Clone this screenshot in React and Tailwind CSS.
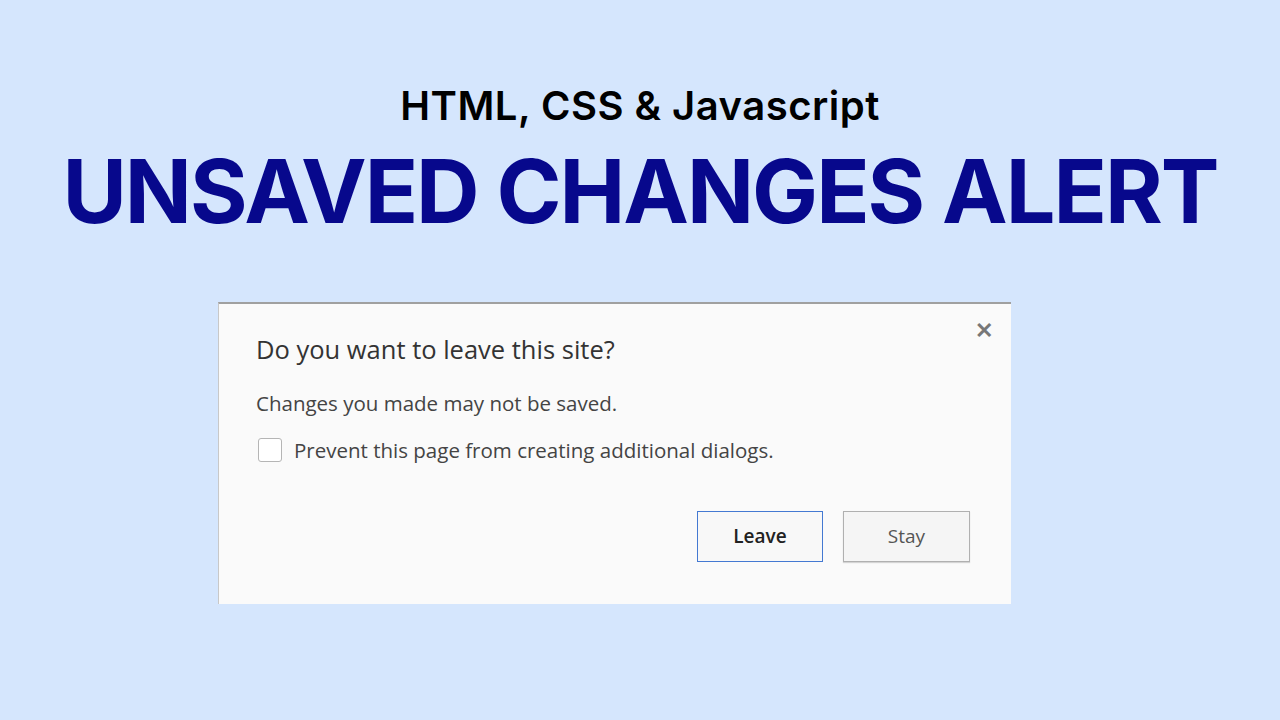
export default function App() {
  return (
    <div className="w-[1280px] h-[720px] bg-[#d5e6fd] flex flex-col items-center overflow-hidden">
      <h2 className="mt-[82px] text-[40px] leading-[48px] font-semibold text-black font-['Inter',sans-serif] tracking-[0.5px] whitespace-nowrap">
        HTML, CSS &amp; Javascript
      </h2>
      <h1 className="mt-[11px] text-[88px] leading-[100px] font-bold text-[#07088c] font-['Inter',sans-serif] tracking-[-2px] whitespace-nowrap">
        UNSAVED CHANGES ALERT
      </h1>

      <div className="relative self-start ml-[218px] mt-[61px] w-[793px] h-[302px] bg-[#fafafa] border-t-2 border-t-[#a0a0a0] border-l border-l-[#c8c8c8] font-['Open_Sans',sans-serif]">
        <button className="absolute right-[18px] top-[14px] text-[#777] text-[22px] leading-none font-bold">
          ✕
        </button>
        <div className="pl-[37px] pt-[27px] pr-[40px]">
          <p className="text-[25.5px] leading-[36px] text-[#333]">Do you want to leave this site?</p>
          <p className="mt-[22px] text-[20.5px] leading-[28px] text-[#444]">Changes you made may not be saved.</p>
          <label className="mt-[19px] flex items-center gap-[12px]">
            <span className="w-[24px] h-[24px] border border-[#b5b5b5] rounded-[3px] bg-white ml-[2px]"></span>
            <span className="text-[20.5px] leading-[28px] text-[#444]">Prevent this page from creating additional dialogs.</span>
          </label>
          <div className="mt-[47px] flex justify-end gap-[20px] pr-[1px]">
            <button className="w-[126px] h-[51px] border border-[#4479d2] bg-[#f8f8f8] text-[19px] font-semibold text-[#222]">
              Leave
            </button>
            <button className="w-[127px] h-[51px] border border-[#b0b0b0] bg-[#f5f5f5] text-[19px] text-[#555] shadow-[0_1px_1px_rgba(0,0,0,0.15)]">
              Stay
            </button>
          </div>
        </div>
      </div>
    </div>
  );
}
